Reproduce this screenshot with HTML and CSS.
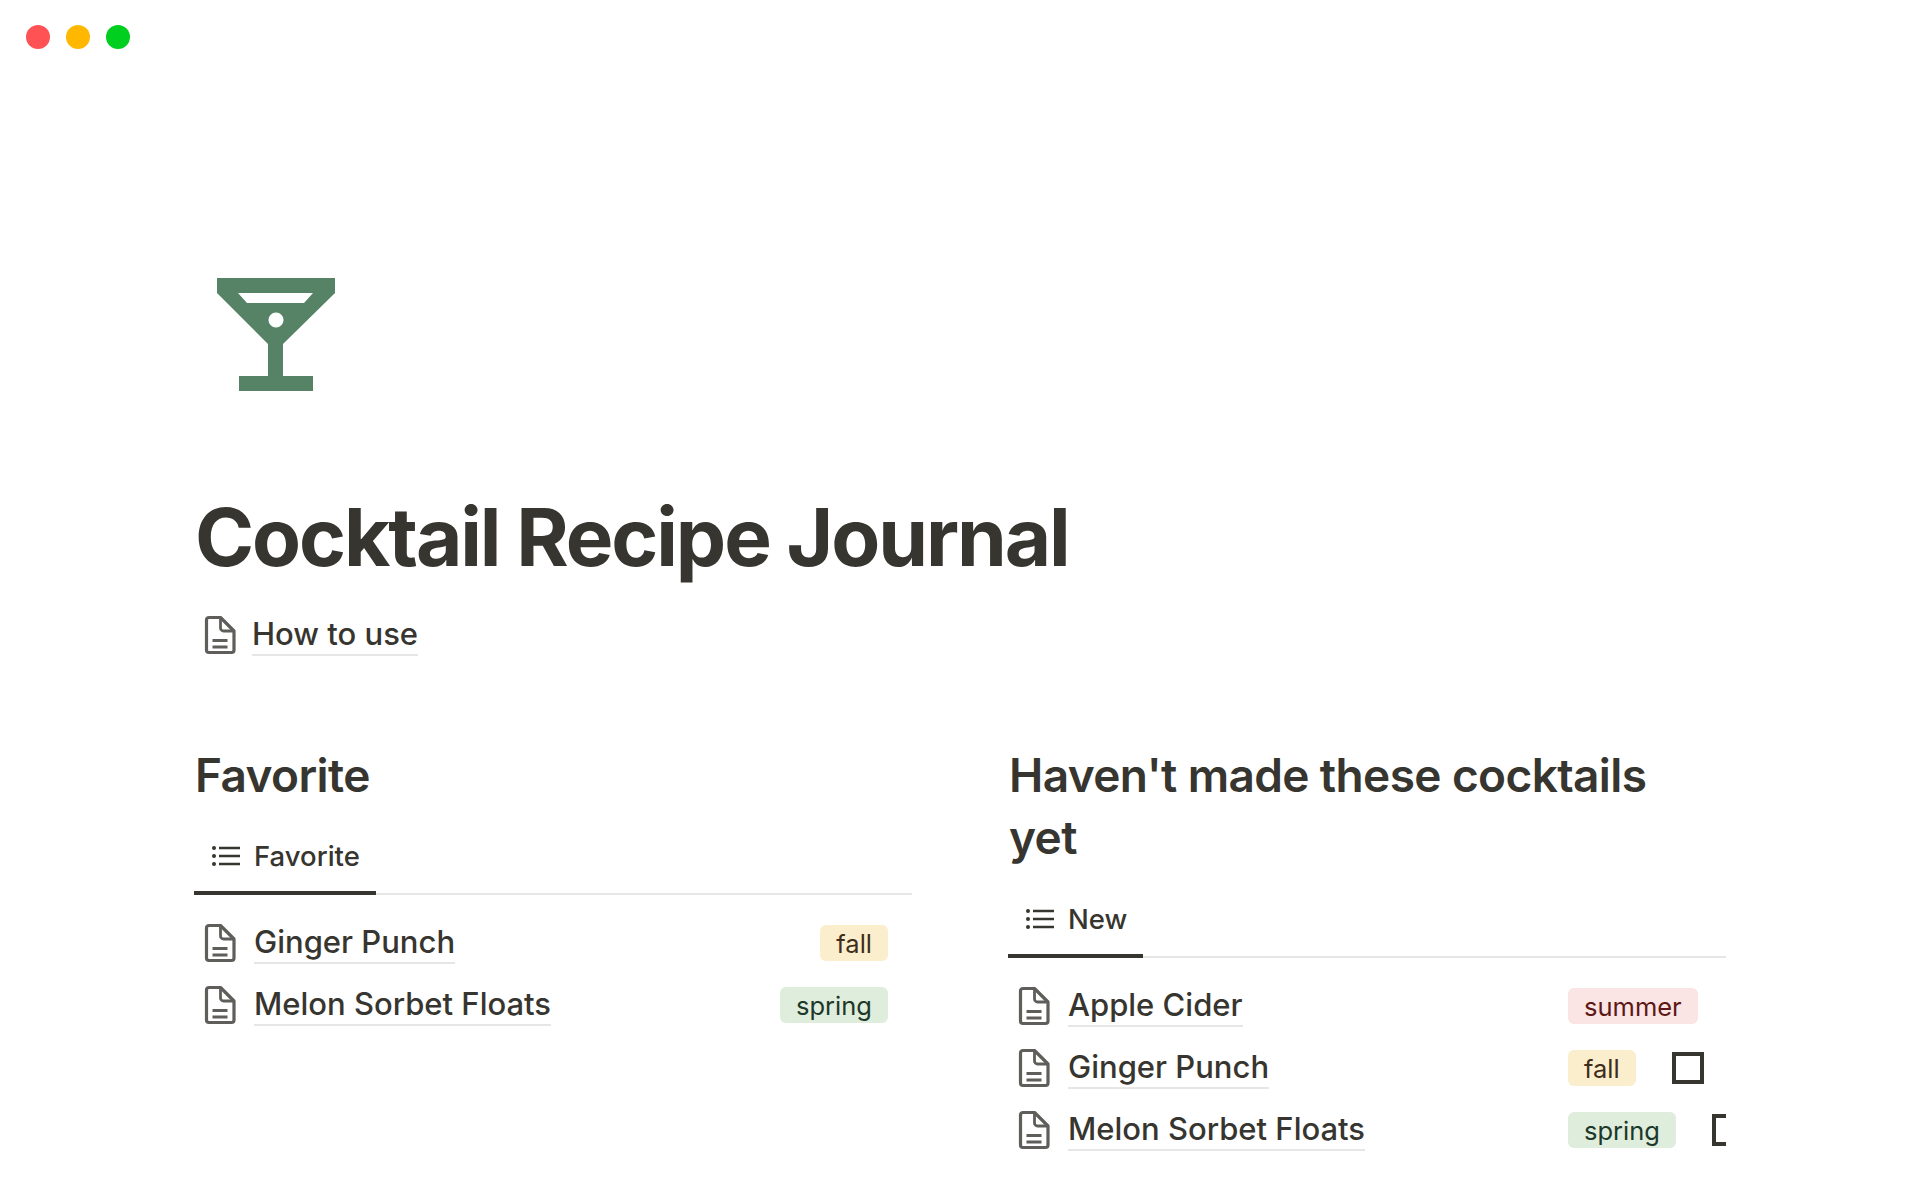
FILE: index.html
```html
<!DOCTYPE html>
<html lang="en">
<head>
    <meta charset="UTF-8">
    <meta name="viewport" content="width=device-width, initial-scale=1.0">
    <title>Cocktail Recipe Journal</title>
    <link rel="stylesheet" href="styles.css">
</head>
<body>
    <svg class="defs" width="0" height="0">
        <symbol id="doc" viewBox="0 0 32 40">
            <path d="M5 2.500h11.500L30 16V35a2.500 2.500 0 0 1-2.500 2.500H5A2.500 2.500 0 0 1 2.500 35V5A2.500 2.500 0 0 1 5 2.500Z" fill="none" stroke="#5f5e5a" stroke-width="3.200" stroke-linejoin="round"/>
            <path d="M16.500 2.500V13a3 3 0 0 0 3 3h10.500M8.500 25.500h15M8.500 32h15" fill="none" stroke="#5f5e5a" stroke-width="2.800"/>
        </symbol>
        <symbol id="list" viewBox="0 0 28 20">
            <circle cx="2" cy="2" r="2" fill="#37352f"/>
            <circle cx="2" cy="10" r="2" fill="#37352f"/>
            <circle cx="2" cy="18" r="2" fill="#37352f"/>
            <path d="M7 2h21M7 10h21M7 18h21" stroke="#37352f" stroke-width="2.500"/>
        </symbol>
    </svg>

    <div class="window-dots">
        <span class="dot red"></span>
        <span class="dot yellow"></span>
        <span class="dot green"></span>
    </div>

    <div class="page">
        <svg class="page-icon" viewBox="0 0 118 113">
            <path fill-rule="evenodd" fill="#568366" d="M0 0H118V15L66 66V98H96V113H22V98H51V66L0 15ZM21 15L30 25H87L96 15ZM59 34.500a7.500 7.500 0 1 0 0.010 0Z"/>
        </svg>

        <h1>Cocktail Recipe Journal</h1>

        <div class="page-link">
            <svg class="doc-icon"><use href="#doc"/></svg>
            <a>How to use</a>
        </div>

        <div class="columns">
            <section class="column">
                <h2>Favorite</h2>
                <div class="tabs">
                    <div class="tab">
                        <svg class="list-icon"><use href="#list"/></svg>
                        Favorite
                    </div>
                </div>
                <div class="row">
                    <svg class="doc-icon"><use href="#doc"/></svg>
                    <a class="row-title">Ginger Punch</a>
                    <span class="tag fall">fall</span>
                </div>
                <div class="row">
                    <svg class="doc-icon"><use href="#doc"/></svg>
                    <a class="row-title">Melon Sorbet Floats</a>
                    <span class="tag spring">spring</span>
                </div>
            </section>

            <section class="column">
                <h2>Haven't made these cocktails yet</h2>
                <div class="tabs tabs-after-wrap">
                    <div class="tab">
                        <svg class="list-icon"><use href="#list"/></svg>
                        New
                    </div>
                </div>
                <div class="row">
                    <svg class="doc-icon"><use href="#doc"/></svg>
                    <a class="row-title">Apple Cider</a>
                    <div class="props">
                        <span class="tag summer">summer</span>
                        <span class="checkbox"></span>
                    </div>
                </div>
                <div class="row">
                    <svg class="doc-icon"><use href="#doc"/></svg>
                    <a class="row-title">Ginger Punch</a>
                    <div class="props">
                        <span class="tag fall">fall</span>
                        <span class="checkbox"></span>
                    </div>
                </div>
                <div class="row">
                    <svg class="doc-icon"><use href="#doc"/></svg>
                    <a class="row-title">Melon Sorbet Floats</a>
                    <div class="props">
                        <span class="tag spring">spring</span>
                        <span class="checkbox"></span>
                    </div>
                </div>
            </section>
        </div>
    </div>
</body>
</html>
```

FILE: styles.css
```css
html, body {
    height: 100%;
}
body {
    margin: 0;
    overflow: hidden;
    background: #fff;
    color: #37352f;
    font-family: Inter, "Liberation Sans", sans-serif;
}
.defs {
    display: block;
    height: 0;
}
.window-dots {
    display: flex;
    gap: 16px;
    padding: 25px 0 0 26px;
}
.dot {
    width: 24px;
    height: 24px;
    border-radius: 50%;
}
.red { background: #ff5254; }
.yellow { background: #ffb700; }
.green { background: #00cf1f; }

.page {
    width: 1532px;
    margin-left: 194px;
}
.page-icon {
    display: block;
    width: 118px;
    height: 113px;
    margin: 229px 0 0 23px;
}
h1 {
    margin: 98px 0 0 1px;
    font-size: 80px;
    line-height: 96px;
    font-weight: 700;
    letter-spacing: -2.100px;
}
.page-link {
    display: flex;
    align-items: center;
    height: 62px;
    margin-top: 19px;
}
.doc-icon {
    flex: none;
    width: 32px;
    height: 40px;
    margin: 0 16px 0 10px;
}
.row .doc-icon {
    margin-right: 18px;
}
.page-link a,
.row-title {
    font-size: 31px;
    line-height: 40px;
    font-weight: 500;
    border-bottom: 2px solid #e6e6e5;
}
.columns {
    display: grid;
    grid-template-columns: 718px 718px;
    gap: 96px;
    margin-top: 78px;
}
.column {
    min-width: 0;
}
h2 {
    margin: 0 0 0 1px;
    padding-right: 24px;
    font-size: 46px;
    line-height: 62px;
    font-weight: 600;
    letter-spacing: -0.620px;
}
.tabs {
    display: flex;
    border-bottom: 2px solid #e6e6e5;
    margin-top: 19px;
    margin-bottom: 17px;
}
.tabs-after-wrap {
    margin-top: 20px;
}
.tab {
    display: flex;
    align-items: center;
    gap: 14px;
    height: 62px;
    padding: 0 16px 4px 18px;
    margin-bottom: -2px;
    border-bottom: 4px solid #37352f;
    font-size: 27.500px;
    font-weight: 500;
}
.list-icon {
    width: 28px;
    height: 20px;
}
.row {
    display: flex;
    align-items: center;
    height: 62px;
    overflow: hidden;
}
.row-title {
    flex: 1 0 auto;
    max-width: max-content;
    margin-right: auto;
}
.props {
    display: flex;
    align-items: center;
    flex: none;
    width: 158px;
}
.tag {
    flex: none;
    height: 36px;
    line-height: 38px;
    padding: 0 16px;
    border-radius: 6px;
    font-size: 25.500px;
}
.row > .tag {
    margin-right: 24px;
}
.fall { background: #fbeecc; color: #402c1b; }
.spring { background: #dfeddd; color: #1c3829; }
.summer { background: #fbe4e4; color: #5d1715; }
.checkbox {
    flex: none;
    box-sizing: border-box;
    width: 32px;
    height: 32px;
    margin-left: 36px;
    border: 4px solid #37352f;
}
```
